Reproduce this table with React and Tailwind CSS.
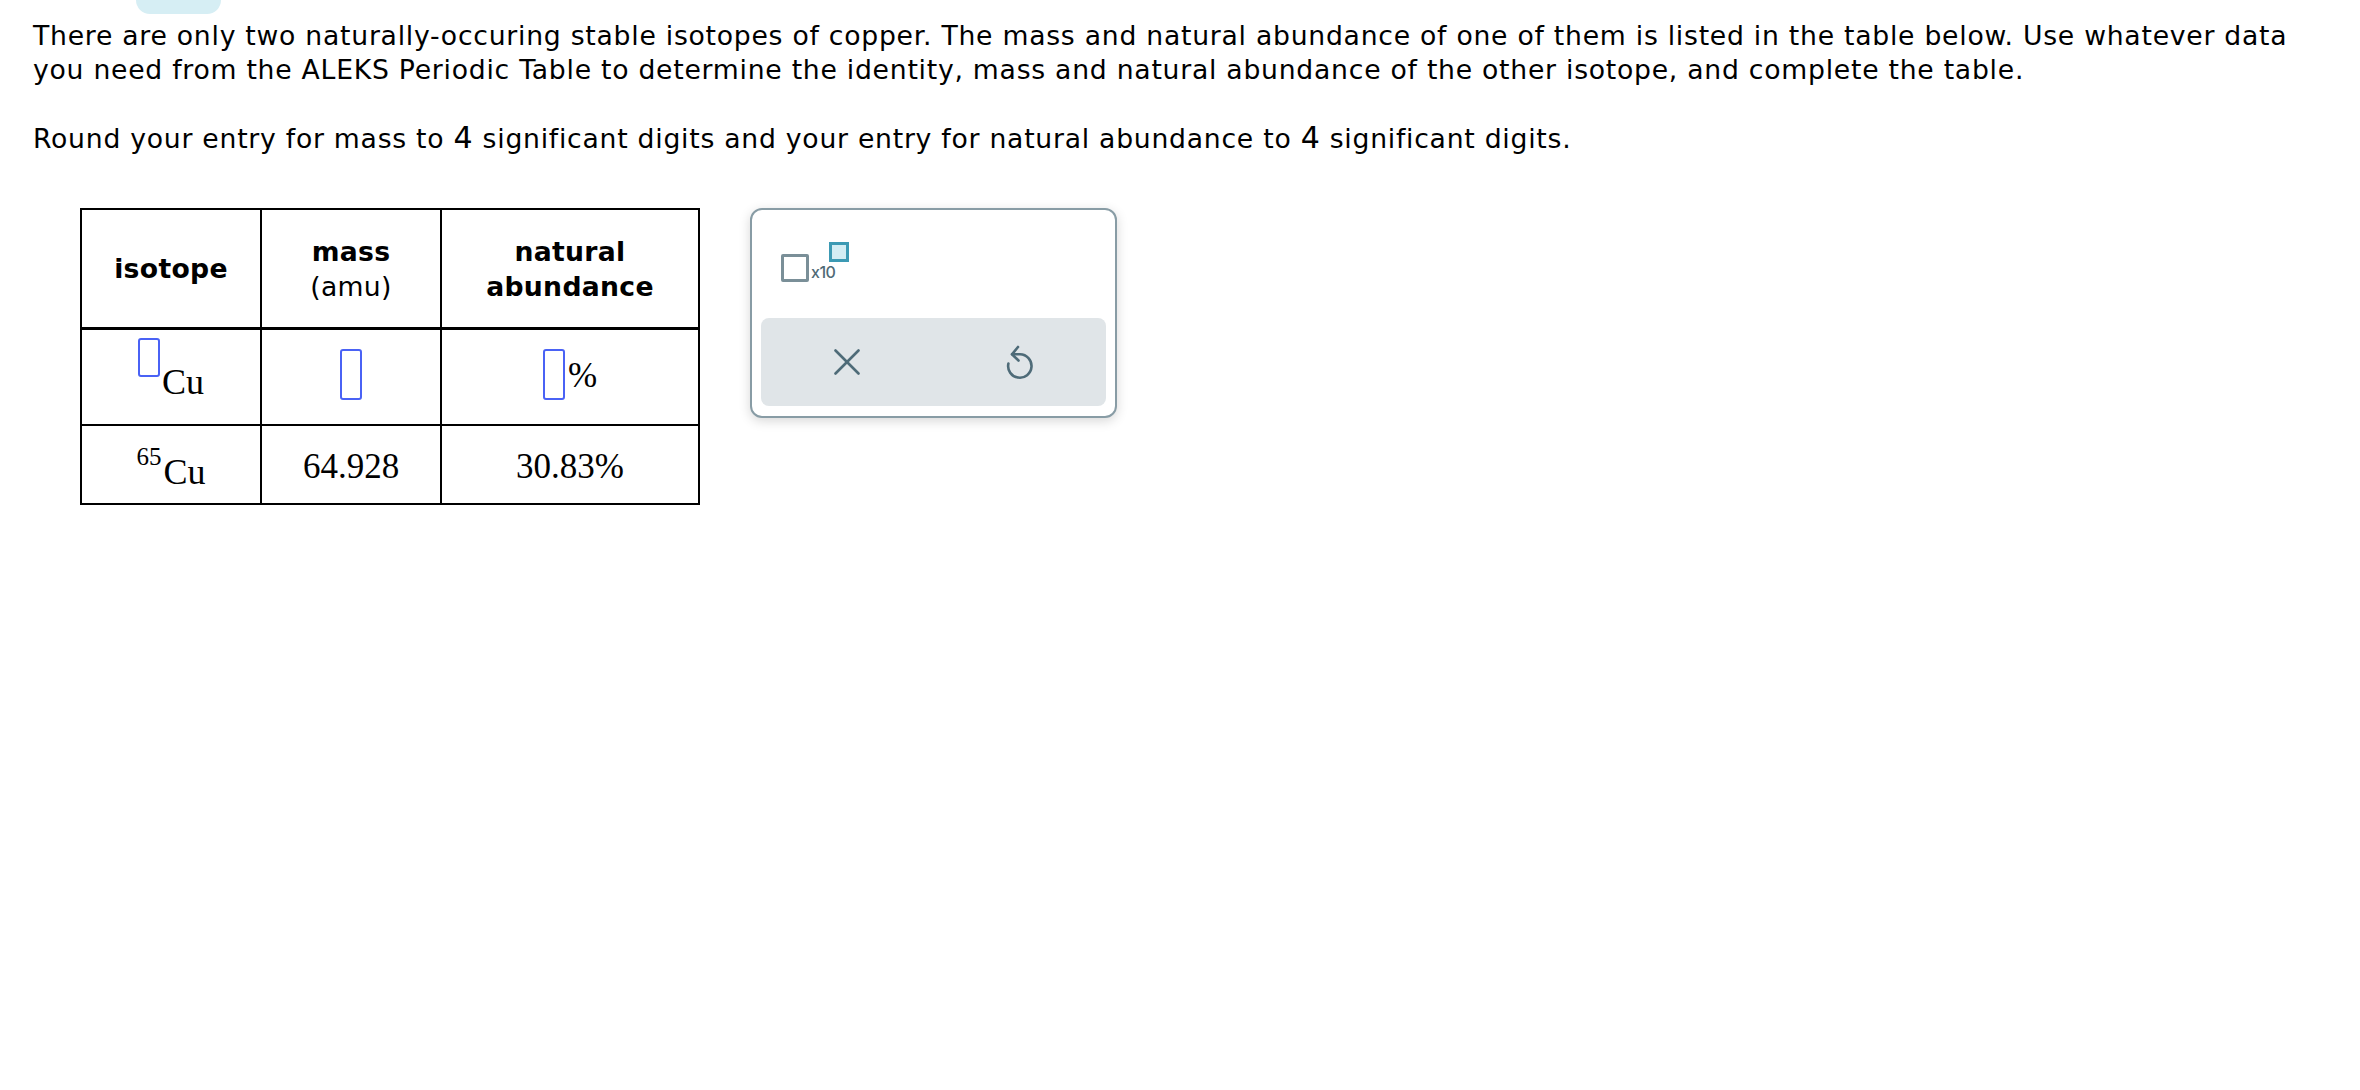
import React from "react";

function XIcon() {
  return (
    <svg width="26" height="26" viewBox="0 0 26 26" fill="none" stroke="#4e6b78" strokeWidth="2.6" strokeLinecap="round">
      <path d="M1.5 1.5 L24.5 24.5" />
      <path d="M24.5 1.5 L1.5 24.5" />
    </svg>
  );
}

function UndoIcon() {
  return (
    <svg width="36" height="36" viewBox="0 0 36 36" fill="none" stroke="#4e6b78" strokeWidth="2.6" strokeLinecap="round" strokeLinejoin="round">
      <path d="M10 10.3 H18 A11.7 11.7 0 1 1 6.4 19.5" />
      <path d="M16 3 L10 10.3 L16.5 16.5" />
    </svg>
  );
}

function Blank({ h = "h-[51px]" }) {
  return <div className={`w-[22px] ${h} rounded-[3px] border-2 border-[#4a62f5] bg-white`} />;
}

export default function App() {
  const serif = "font-['Liberation_Serif','Times_New_Roman',serif]";
  return (
    <div className="min-h-screen bg-white text-black font-['DejaVu_Sans',Verdana,sans-serif]">
      <div className="ml-[136px] h-[14px] w-[85px] rounded-b-[14px] bg-[#d6eef4]" />
      <div className="px-[33px] pt-[4.5px] text-[26.67px] leading-[34px] tracking-[0.74px]">
        <p>
          There are only two naturally-occuring stable isotopes of copper. The mass and natural abundance of one of them is listed in the table below. Use whatever data you need from the ALEKS Periodic Table to determine the identity, mass and natural abundance of the other isotope, and complete the table.
        </p>
        <p className="mt-[34.5px]">
          Round your entry for mass to <span className="text-[30px]">4</span> significant digits and your entry for natural abundance to <span className="text-[30px]">4</span> significant digits.
        </p>
      </div>

      <div className="ml-[80px] mt-[52px] flex items-start">
        <div className="w-[620px] border-2 border-black">
          <div className="grid grid-cols-[180px_180px_256px] h-[120px] border-b-[3px] border-black text-[26.67px] leading-[35px] tracking-[0.3px]">
            <div className="flex items-center justify-center border-r-2 border-black font-bold">isotope</div>
            <div className="flex flex-col items-center justify-center border-r-2 border-black text-center">
              <span className="font-bold">mass</span>
              <span>(amu)</span>
            </div>
            <div className="flex flex-col items-center justify-center text-center font-bold">
              <span>natural</span>
              <span>abundance</span>
            </div>
          </div>
          <div className={`grid grid-cols-[180px_180px_256px] h-[96px] border-b-2 border-black ${serif}`}>
            <div className="flex items-start justify-center border-r-2 border-black pt-[8px]">
              <Blank h="h-[39px]" />
              <span className="ml-[2px] mt-[26px] text-[36px] leading-[36px]">Cu</span>
            </div>
            <div className="flex items-start justify-center border-r-2 border-black pt-[19px]">
              <Blank />
            </div>
            <div className="flex items-start justify-center pt-[19px]">
              <Blank />
              <span className="ml-[3px] mt-[9px] text-[35px] leading-[35px]">%</span>
            </div>
          </div>
          <div className={`grid grid-cols-[180px_180px_256px] h-[77px] ${serif}`}>
            <div className="flex items-start justify-center border-r-2 border-black pt-[18px]">
              <span className="text-[25px] leading-[25px]">65</span>
              <span className="ml-[2px] mt-[10px] text-[36px] leading-[36px]">Cu</span>
            </div>
            <div className="flex items-center justify-center border-r-2 border-black pt-[3px] text-[35px] leading-[35px]">
              64.928
            </div>
            <div className="flex items-center justify-center pt-[3px] text-[35px] leading-[35px]">
              30.83%
            </div>
          </div>
        </div>

        <div className="ml-[50px] flex h-[210px] w-[367px] flex-col rounded-[12px] border-2 border-[#889ca5] bg-white px-[9px] pb-[10px] shadow-[0_3px_12px_rgba(0,0,0,0.16)]">
          <div className="flex-1 pl-[20px] pt-[44px]">
            <div className="relative flex items-end">
              <div className="h-[28px] w-[28px] rounded-[2px] border-[3px] border-[#7a8f98]" />
              <span className="ml-[2px] mb-[2px] font-['Inter',sans-serif] text-[16px] font-medium leading-[16px] tracking-[-0.5px] text-[#4f6a76]">x10</span>
              <div className="absolute left-[48px] top-[-12px] h-[20px] w-[20px] border-[3px] border-[#3c9ab4] bg-[#d3edf4]" />
            </div>
          </div>
          <div className="flex h-[88px] rounded-[8px] bg-[#e0e5e8]">
            <div className="flex flex-1 items-center justify-center">
              <XIcon />
            </div>
            <div className="flex flex-1 items-center justify-center">
              <UndoIcon />
            </div>
          </div>
        </div>
      </div>
    </div>
  );
}
